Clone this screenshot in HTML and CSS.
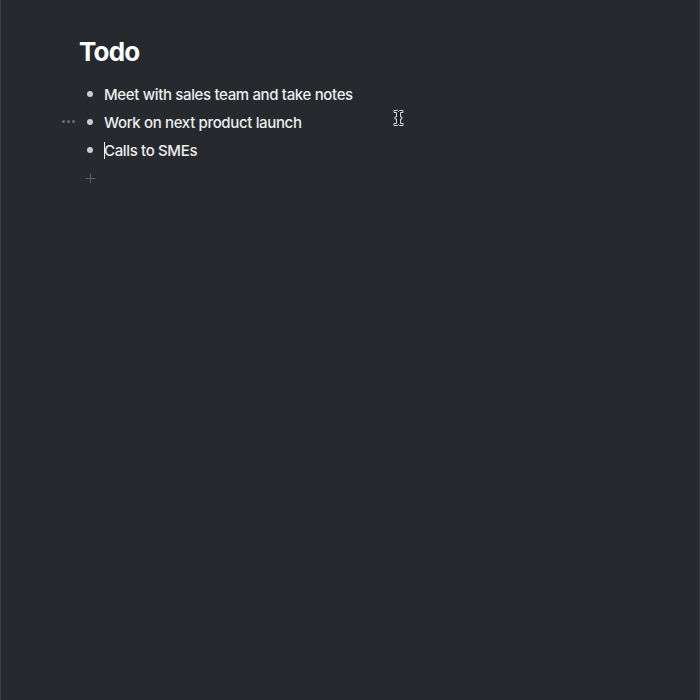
FILE: index.html
```html
<!DOCTYPE html>
<html lang="en">
<head>
    <meta charset="UTF-8">
    <meta name="viewport" content="width=device-width, initial-scale=1.0">
    <title>Todo</title>
    <link rel="stylesheet" href="styles.css">
</head>
<body>

    <main class="page">
        <h1 class="page-title">Todo</h1>

        <ul class="todo-list">
            <li class="todo-item">
                <span class="bullet"></span>
                <span class="todo-text">Meet with sales team and take notes</span>
            </li>
            <li class="todo-item hovered">
                <span class="drag-handle"><i></i><i></i><i></i></span>
                <span class="bullet"></span>
                <span class="todo-text">Work on next product launch</span>
            </li>
            <li class="todo-item">
                <span class="bullet"></span>
                <span class="todo-text"><span class="caret"></span>Calls to SMEs</span>
            </li>
            <li class="todo-item add-row">
                <span class="add-icon">
                    <svg width="11" height="11" viewBox="0 0 11 11">
                        <path d="M5.5 0.5v10M0.5 5.5h10" stroke="#5a5f64" stroke-width="1" fill="none"/>
                    </svg>
                </span>
            </li>
        </ul>
    </main>

    <!-- mouse pointer -->
    <svg class="mouse-cursor" width="11" height="19" viewBox="0 0 11 19">
        <path d="M1 1.5h3.5l1 1 1-1H10v2H7.5v4.5h1.5v2H7.5v4.5H10v2H6.5l-1-1-1 1H1v-2h2.5v-4.5H2v-2h1.5V3.5H1z"
              fill="#1e2124" stroke="#d8d8d8" stroke-width="1"/>
    </svg>

</body>
</html>
```

FILE: styles.css
```css
html, body {
    height: 100%;
}

body {
    margin: 0;
    background-color: #262a2e;
    color: #ececec;
    font-family: Inter, "Liberation Sans", sans-serif;
    border-left: 1px solid #3a3f44;
    border-right: 1px solid #3a3f44;
    box-sizing: border-box;
}

.page {
    padding: 36px 0 0 79px;
}

.page-title {
    margin: 0 0 12px -1px;
    font-size: 26px;
    font-weight: 700;
    letter-spacing: -0.8px;
    color: #ffffff;
    line-height: 32px;
}

.todo-list {
    list-style: none;
    margin: 0;
    padding: 0;
}

.todo-item {
    position: relative;
    display: flex;
    align-items: center;
    height: 28px;
    font-size: 15px;
    font-weight: 500;
    letter-spacing: -0.35px;
}

.bullet {
    width: 6px;
    height: 6px;
    border-radius: 50%;
    background-color: #c9cbcd;
    margin: 0 11px 0 7px;
    flex-shrink: 0;
}

.todo-text {
    position: relative;
    color: #ededed;
}

.caret {
    position: absolute;
    left: 0;
    top: 1px;
    width: 1px;
    height: 17px;
    background-color: #f0f0f0;
}

/* ручка перетаскивания у строки под мышью */
.drag-handle {
    position: absolute;
    left: -18px;
    top: 12px;
    display: flex;
    gap: 2px;
}

.drag-handle i {
    width: 3px;
    height: 3px;
    border-radius: 50%;
    background-color: #6a6e72;
}

.add-icon {
    display: flex;
    margin-left: 5px;
}

.mouse-cursor {
    position: absolute;
    left: 393px;
    top: 109px;
}
```
